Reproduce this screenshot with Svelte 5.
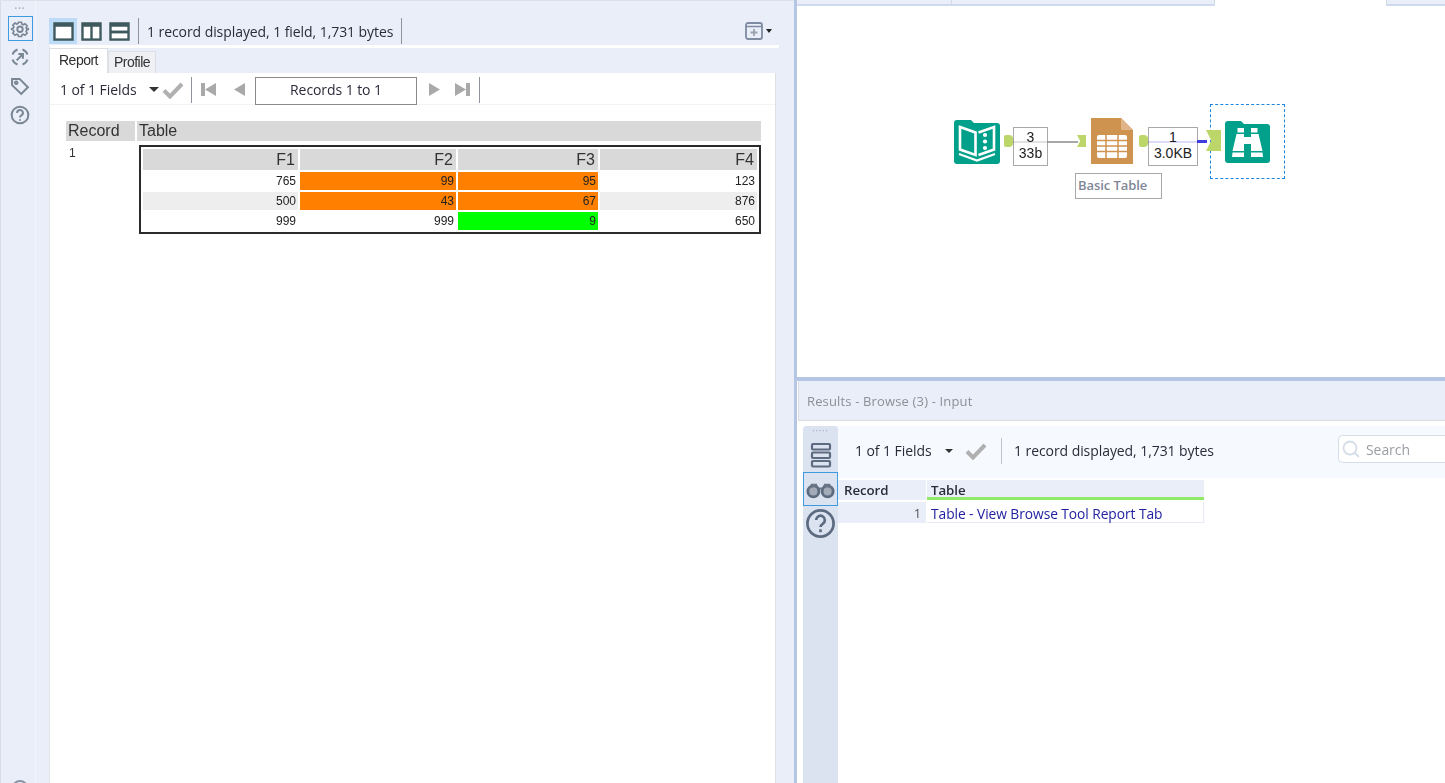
<script>
  const columns = ['F1', 'F2', 'F3', 'F4'];
  const rows = [
    [['765'], ['99', 'orange'], ['95', 'orange'], ['123']],
    [['500'], ['43', 'orange'], ['67', 'orange'], ['876']],
    [['999'], ['999'], ['9', 'green'], ['650']]
  ];
</script>

<div class="app">
  <section class="left">
    <nav class="rail">
      <div class="grip">•••</div>
      <button class="rail-btn selected" aria-label="Settings">
        <svg viewBox="0 0 24 24" width="22" height="22" fill="none" stroke="#7b8694" stroke-width="2.200">
          <path d="M10 3h4l.6 2.600 1.800.8 2.300-1.400 2.800 2.800-1.400 2.300.8 1.800L23 11.500v1l-2.100.9-.8 1.800 1.400 2.300-2.800 2.800-2.300-1.400-1.800.8L14 22h-4l-.6-2.300-1.800-.8-2.300 1.400-2.800-2.800 1.400-2.300-.8-1.800L1 12.500v-1l2.100-.6.8-1.800-1.400-2.300 2.800-2.800 2.300 1.400 1.800-.8z" transform="translate(1.200 1.200) scale(.9)"/>
          <circle cx="12" cy="12.300" r="3.300"/>
        </svg>
      </button>
      <button class="rail-btn" aria-label="Annotation">
        <svg viewBox="0 0 24 24" width="22" height="22" fill="none" stroke="#7b8694" stroke-width="2.400">
          <path d="M3 9a10 10 0 0 1 6-6M15 3a10 10 0 0 1 6 6M21 15a10 10 0 0 1-6 6M9 21a10 10 0 0 1-6-6"/>
          <path d="M8 16l7-7M10 8.500h5.500V14"/>
        </svg>
      </button>
      <button class="rail-btn" aria-label="Tags">
        <svg viewBox="0 0 24 24" width="22" height="22" fill="none" stroke="#7b8694" stroke-width="2.400">
          <path d="M2.500 3.500h9l10 10-8 8-11-10.500z"/><circle cx="7.500" cy="8" r="1.500"/>
        </svg>
      </button>
      <button class="rail-btn" aria-label="Help">
        <svg viewBox="0 0 24 24" width="22" height="22" fill="none" stroke="#7b8694" stroke-width="2.400">
          <circle cx="12" cy="12" r="10"/><path d="M8.500 9.500a3.500 3.500 0 1 1 5.200 3c-1.200.7-1.700 1.300-1.700 2.500"/><path d="M12 17v2"/>
        </svg>
      </button>
      <div class="rail-foot"></div>
    </nav>

    <div class="left-main">
      <header class="view-bar">
        <button class="view active" aria-label="Single">
          <svg viewBox="0 0 22 20" width="21" height="19"><rect x="1.500" y="1.500" width="19" height="17" fill="#fff" stroke="#3f5a5f" stroke-width="2.500"/><path d="M1 3.500h20" stroke="#3f5a5f" stroke-width="3"/></svg>
        </button>
        <button class="view" aria-label="Columns">
          <svg viewBox="0 0 22 20" width="21" height="19"><rect x="1.500" y="1.500" width="19" height="17" fill="#fff" stroke="#3f5a5f" stroke-width="2.500"/><path d="M1 3.500h20" stroke="#3f5a5f" stroke-width="3"/><path d="M11 2v16" stroke="#3f5a5f" stroke-width="2.500"/></svg>
        </button>
        <button class="view" aria-label="Rows">
          <svg viewBox="0 0 22 20" width="21" height="19"><rect x="1.500" y="1.500" width="19" height="17" fill="#fff" stroke="#3f5a5f" stroke-width="2.500"/><path d="M1 3.500h20" stroke="#3f5a5f" stroke-width="3"/><path d="M1 10.500h20" stroke="#3f5a5f" stroke-width="3"/></svg>
        </button>
        <span class="sep tall first-sep"></span>
        <span class="summary">1 record displayed, 1 field, 1,731 bytes</span>
        <span class="sep tall"></span>
        <span class="spacer"></span>
        <svg class="layout-icon" viewBox="0 0 18 18" width="18" height="18" fill="none">
          <rect x="1" y="1" width="16" height="16" rx="2" stroke="#7f8ba3" stroke-width="1.800"/>
          <path d="M1 4.500h16" stroke="#7f8ba3" stroke-width="1.500"/>
          <path d="M9 7v7M5.500 10.500h7" stroke="#9aa3ad" stroke-width="1.800"/>
        </svg>
        <span class="mini-caret"></span>
      </header>
      <div class="white-rule"></div>

      <div class="tabs">
        <span class="tab current">Report</span>
        <span class="tab">Profile</span>
      </div>

      <div class="report-panel">
        <div class="pager">
          <span class="fields">1 of 1 Fields</span>
          <span class="caret"></span>
          <svg class="check" viewBox="0 0 22 18" width="22" height="18"><path d="M2 9.500l6 6L20 3" fill="none" stroke="#b0b0b0" stroke-width="4"/></svg>
          <span class="sep pager-sep"></span>
          <svg class="nav first" viewBox="0 0 15 15" width="15" height="15"><path d="M0 1h4v13H0zM15 1v13L4 7.500z" fill="#a9a9a9"/></svg>
          <svg class="nav prev" viewBox="0 0 11 15" width="11" height="15"><path d="M11 1v13L0 7.500z" fill="#a9a9a9"/></svg>
          <div class="records">Records 1 to 1</div>
          <svg class="nav next" viewBox="0 0 11 15" width="11" height="15"><path d="M0 1v13l11-6.500z" fill="#a9a9a9"/></svg>
          <svg class="nav last" viewBox="0 0 15 15" width="15" height="15"><path d="M15 1h-4v13h4zM0 1v13l11-6.500z" fill="#a9a9a9"/></svg>
          <span class="sep pager-sep end"></span>
        </div>

        <div class="report">
          <div class="report-head">
            <span class="rh-record">Record</span>
            <span class="rh-table">Table</span>
          </div>
          <div class="report-row">
            <span class="record-no">1</span>
            <table class="inner">
              <colgroup>
                <col style="width:155px" /><col style="width:156px" /><col style="width:140px" /><col style="width:157px" />
              </colgroup>
              <thead>
                <tr>{#each columns as c}<th>{c}</th>{/each}</tr>
              </thead>
              <tbody>
                {#each rows as row, i}
                  <tr class:striped={i === 1}>
                    {#each row as cell}<td class={cell[1] ?? ''}>{cell[0]}</td>{/each}
                  </tr>
                {/each}
              </tbody>
            </table>
          </div>
        </div>
      </div>
    </div>
  </section>

  <div class="v-divider"></div>

  <section class="right">
    <div class="doc-tabs">
      <span class="doc-tab t1"></span>
      <span class="doc-tab t2"></span>
      <span class="doc-gap"></span>
      <span class="doc-tab t3"></span>
    </div>

    <div class="canvas">
      <svg class="node" style="left:157px;top:112px" viewBox="0 0 46 46" width="46" height="46">
        <path d="M0 5a3 3 0 0 1 3-3h14l3 3h23a3 3 0 0 1 3 3v35a3 3 0 0 1-3 3H3a3 3 0 0 1-3-3z" fill="#00a08a"/>
        <path d="M6 9l15.500 5.500V37L6 31.500z" fill="none" stroke="#fff" stroke-width="2.600"/>
        <path d="M24.500 14.500L40 9v22.500L24.500 37" fill="none" stroke="#fff" stroke-width="2.600"/>
        <path d="M5 36l18 6.500L41 36" fill="none" stroke="#fff" stroke-width="2.200"/>
        <circle cx="31" cy="17" r="2.100" fill="#fff"/><circle cx="31" cy="23.500" r="2.100" fill="#fff"/><circle cx="31" cy="30" r="2.100" fill="#fff"/>
      </svg>
      <span class="anchor out" style="left:207px;top:129px"></span>
      <div class="count" style="left:216px;top:121px;width:35px">3<br />33b</div>
      <span class="wire faint grey" style="left:216px;top:135px;width:35px"></span>
      <span class="wire" style="left:251px;top:135px;width:30px"></span>
      <span class="anchor in" style="left:280px;top:129px"></span>

      <svg class="node" style="left:294px;top:112px" viewBox="0 0 42 46" width="42" height="46">
        <path d="M0 0h30l12 12v34H0z" fill="#cf9350"/>
        <path d="M30 0l12 12H30z" fill="#e0b488"/>
        <rect x="6" y="17" width="30" height="23" rx="2" fill="#fff"/>
        <path d="M6 22.500h30M6 28h30M6 33.500h30M15 17v23M27 17v23" stroke="#cf9350" stroke-width="1.500"/>
      </svg>
      <span class="anchor out" style="left:342px;top:129px"></span>
      <div class="count" style="left:351px;top:121px;width:50px">1<br />3.0KB</div>
      <span class="wire faint" style="left:351px;top:135px;width:50px"></span>
      <span class="wire purple" style="left:400px;top:135px;width:10px"></span>

      <div class="comment" style="left:278px;top:167px">Basic Table</div>

      <div class="selection" style="left:413px;top:98px"></div>
      <span class="anchor big" style="left:409px;top:124px"></span>
      <svg class="node" style="left:428px;top:114px" viewBox="0 0 45 43" width="45" height="43">
        <path d="M0 4a3 3 0 0 1 3-3h13l3 3h23a3 3 0 0 1 3 3v33a3 3 0 0 1-3 3H3a3 3 0 0 1-3-3z" fill="#00a08a"/>
        <path d="M12.500 8h6.500v4.500h-6.500zM26 8h6.500v4.500H26zM11.500 14H19v17H7.500zM26 14h7.500L37.500 31H26zM19 17h7v7h-7zM7.500 32.500H19V37H7zM26 32.500h11.500L38 37H26z" fill="#fff"/>
      </svg>
    </div>

    <div class="h-divider"></div>

    <div class="results-title">Results - Browse (3) - Input</div>

    <div class="results">
      <aside class="res-rail">
        <div class="res-grip">•••••</div>
        <button class="res-btn" aria-label="Metadata">
          <svg viewBox="0 0 24 26" width="24" height="26" fill="none" stroke="#5d6b80" stroke-width="2.200">
            <rect x="3" y="2" width="18" height="5.500" rx="1"/><rect x="3" y="10.500" width="18" height="5.500" rx="1"/><rect x="3" y="19" width="18" height="5.500" rx="1"/>
          </svg>
        </button>
        <button class="res-btn picked" aria-label="Browse">
          <svg viewBox="0 0 30 20" width="29" height="19" fill="#6a7586">
            <circle cx="7.500" cy="12" r="5.800" fill="#a3abb8" stroke="#5d6b80" stroke-width="3"/>
            <circle cx="22.500" cy="12" r="5.800" fill="#a3abb8" stroke="#5d6b80" stroke-width="3"/>
            <path d="M2 10l3-6h6l2 4h4l2-4h6l3 6-6-3h-4l-2 3h-2l-2-3H8z"/>
          </svg>
        </button>
        <button class="res-btn help" aria-label="Help">
          <svg viewBox="0 0 32 32" width="31" height="31" fill="none" stroke="#5d6b80" stroke-width="2.800">
            <circle cx="16" cy="16" r="13.500"/><path d="M11.500 12.500a4.500 4.500 0 1 1 6.800 3.900c-1.500.9-2.300 1.600-2.300 3.100"/><path d="M16 22v3"/>
          </svg>
        </button>
      </aside>
      <div class="res-main">
        <div class="res-bar">
          <span class="res-fields">1 of 1 Fields</span>
          <span class="caret small"></span>
          <svg class="res-check" viewBox="0 0 22 18" width="22" height="18"><path d="M2 9.500l6 6L20 3" fill="none" stroke="#b0b0b0" stroke-width="4"/></svg>
          <span class="sep res-sep"></span>
          <span class="res-summary">1 record displayed, 1,731 bytes</span>
          <span class="spacer"></span>
          <div class="search">
            <svg viewBox="0 0 18 18" width="18" height="18" fill="none" stroke="#d5dde9" stroke-width="1.800"><circle cx="8" cy="8" r="6.500"/><path d="M12.500 12.500l4.500 4.500"/></svg>
            <span>Search</span>
          </div>
        </div>
        <div class="grid-table">
          <div class="gt-head gt-record">Record</div>
          <div class="gt-head gt-table">Table</div>
          <div class="gt-no">1</div>
          <div class="gt-link">Table - View Browse Tool Report Tab</div>
        </div>
      </div>
    </div>
  </section>
</div>

<style>
  :global(body) {
    margin: 0;
    background: #fff;
    overflow: hidden;
  }
  .app {
    display: grid;
    grid-template-columns: 794px 3px 1fr;
    width: 1445px;
    height: 783px;
    overflow: hidden;
    font-family: "Open Sans", "Noto Sans", sans-serif;
    font-size: 14px;
    letter-spacing: -.07px;
    color: #333;
  }
  button {
    border: 0;
    padding: 0;
    background: none;
    display: flex;
    align-items: center;
    justify-content: center;
  }

  /* left pane */
  .left {
    display: grid;
    grid-template-columns: 36px 1fr;
    background: #e9eef9;
    border-top: 1px solid #dde2ea;
    box-sizing: border-box;
    height: 783px;
    min-width: 0;
  }
  .rail {
    display: flex;
    flex-direction: column;
    align-items: center;
    border-left: 1px solid #d8dde6;
    border-right: 1px solid #f2f5fb;
    box-sizing: border-box;
    padding-left: 4px;
    overflow: hidden;
  }
  .grip {
    font-size: 7px;
    letter-spacing: 1px;
    color: #a9b0bb;
    height: 15px;
    line-height: 15px;
  }
  .rail-btn {
    width: 25px;
    height: 25px;
    margin-bottom: 3.700px;
    box-sizing: border-box;
  }
  .rail-btn svg { width: 20px; height: 20px; }
  .rail-btn.selected { border: 1px solid #3f9be0; }
  .rail-foot {
    margin-top: auto;
    margin-bottom: -13px;
    width: 16px;
    height: 16px;
    border: 2px solid #8792a3;
    border-radius: 50%;
    box-sizing: border-box;
    flex: none;
  }
  .left-main {
    display: flex;
    flex-direction: column;
    min-width: 0;
    padding-left: 13px;
    padding-right: 18px;
  }
  .view-bar {
    display: flex;
    align-items: center;
    height: 28px;
    margin-top: 16px;
  }
  .view {
    width: 28px;
    height: 26px;
  }
  .view.active { background: #bcdcf7; }
  .sep {
    display: inline-block;
    width: 1px;
    background: #8f949c;
  }
  .tall { height: 26px; }
  .first-sep { margin-left: 5px; }
  .summary {
    margin: 0 8px;
    white-space: nowrap;
    color: #2b2b3a;
  }
  .spacer { flex: 1; }
  .layout-icon { margin-right: 3px; }
  .mini-caret {
    width: 0;
    height: 0;
    border: 3.500px solid transparent;
    border-top: 4px solid #222;
    border-bottom: 0;
    margin-right: 4px;
  }
  .white-rule {
    height: 3px;
    background: #fff;
    margin-right: -3px;
    margin-left: 1px;
  }
  .tabs {
    display: flex;
    align-items: flex-end;
    height: 25px;
  }
  .tab {
    width: 48px;
    height: 22px;
    box-sizing: border-box;
    text-align: center;
    line-height: 21px;
    background: #eef0f3;
    border: 1px solid #dcdfe4;
    border-bottom: 0;
    font-family: "Liberation Sans", sans-serif;
    font-size: 14px;
    letter-spacing: -.5px;
  }
  .tab.current {
    width: 59px;
    height: 25px;
    line-height: 23px;
    background: #fff;
    color: #2e2e2e;
  }
  .report-panel {
    flex: 1;
    background: #fff;
    border-right: 1px solid #dcdfe4;
    border-left: 1px solid #e2e5ea;
    min-height: 0;
  }
  .pager {
    display: flex;
    align-items: center;
    height: 32px;
    padding-top: 2px;
    border-bottom: 1px solid #f3f3f3;
    box-sizing: border-box;
    padding-left: 10px;
  }
  .fields { white-space: nowrap; width: 87px; color: #2b2b3a; }
  .caret {
    width: 0;
    height: 0;
    border: 5px solid transparent;
    border-top: 5px solid #333;
    border-bottom: 0;
    margin-left: 2px;
  }
  .check { margin-left: 3px; margin-top: 1px; }
  .pager-sep { height: 26px; margin-left: 7px; margin-right: 9px; }
  .nav { flex: none; }
  .prev { margin-left: 18px; margin-right: 10px; }
  .records {
    width: 162px;
    height: 28px;
    flex: none;
    box-sizing: border-box;
    border: 1px solid #8a8a8a;
    text-align: center;
    line-height: 24px;
    margin-top: 2px;
    color: #2b2b3a;
  }
  .next { margin-left: 12px; }
  .last { margin-left: 15px; }
  .pager-sep.end { margin-left: 9px; }
  .report {
    padding: 16px 0 0 16px;
    font-family: "Liberation Sans", sans-serif;
    letter-spacing: 0;
  }
  .report-head {
    display: flex;
    gap: 2px;
    height: 20px;
    width: 695px;
    font-size: 16px;
    line-height: 20px;
    color: #333;
  }
  .rh-record {
    width: 69px;
    background: #d9d9d9;
    padding-left: 2px;
    box-sizing: border-box;
  }
  .rh-table {
    flex: 1;
    background: #d9d9d9;
    padding-left: 2px;
  }
  .report-row {
    display: flex;
    margin-top: 4px;
  }
  .record-no {
    width: 73px;
    padding: 1px 0 0 3px;
    box-sizing: border-box;
    font-size: 12px;
    line-height: 14px;
  }
  .inner {
    width: 622px;
    height: 89px;
    table-layout: fixed;
    border: 2px solid #2b2b2b;
    border-collapse: separate;
    border-spacing: 2px;
    box-sizing: border-box;
    font-size: 12px;
    color: #222;
    background: #fff;
  }
  .inner th {
    height: 21px;
    padding: 0 3px 0 0;
    background: #d9d9d9;
    font-size: 16px;
    font-weight: 400;
    text-align: right;
    color: #333;
  }
  .inner td {
    height: 18px;
    padding: 1px 2px 0 0;
    box-sizing: border-box;
    text-align: right;
    line-height: 17px;
  }
  .striped td { background: #eee; }
  .inner td.orange { background: #ff8000; }
  .inner td.green { background: #00ff00; }

  .v-divider { background: #b4c6e4; }

  /* right pane */
  .right {
    display: flex;
    flex-direction: column;
    min-width: 0;
    background: #fff;
  }
  .doc-tabs {
    display: flex;
    height: 6px;
    flex: none;
  }
  .doc-tab {
    background: #e9eef9;
    border-bottom: 2px solid #cfdaec;
    border-right: 1px solid #cfdaec;
    box-sizing: border-box;
  }
  .t1 { width: 155px; }
  .t2 { width: 263px; }
  .doc-gap { width: 171px; }
  .t3 { flex: 1; border-left: 1px solid #cfdaec; border-right: 0; }
  .canvas {
    position: relative;
    height: 371px;
    flex: none;
  }
  .node { position: absolute; }
  .anchor {
    position: absolute;
    width: 9px;
    height: 12px;
    background: #bcd66a;
  }
  .anchor.out { border-radius: 2px 4px 4px 2px; }
  .anchor.in { clip-path: polygon(0 0, 100% 0, 100% 100%, 0 100%, 35% 50%); }
  .anchor.big {
    width: 15px;
    height: 21px;
    clip-path: polygon(0 0, 100% 0, 100% 100%, 0 100%, 35% 50%);
  }
  .count {
    position: absolute;
    height: 39px;
    box-sizing: border-box;
    border: 1px solid #a9a9a9;
    background: #fff;
    text-align: center;
    font-family: "Liberation Sans", sans-serif;
    font-size: 14px;
    letter-spacing: 0;
    line-height: 16px;
    padding-top: 1px;
    color: #222;
  }
  .wire {
    position: absolute;
    height: 2px;
    background: #a8a8a8;
  }
  .wire.purple { background: #3d3de0; height: 3px; margin-top: -1px; }
  .wire.faint { background: #dcdcf8; mix-blend-mode: multiply; }
  .wire.faint.grey { background: #e2e2e2; }
  .comment {
    position: absolute;
    width: 87px;
    height: 26px;
    box-sizing: border-box;
    border: 1px solid #a9a9a9;
    background: #fff;
    font-size: 13px;
    font-weight: 600;
    line-height: 23px;
    padding-left: 2px;
    color: #7f8797;
    white-space: nowrap;
  }
  .selection {
    position: absolute;
    width: 75px;
    height: 75px;
    box-sizing: border-box;
    border: 1px dashed #1c86e0;
  }
  .h-divider {
    height: 4px;
    flex: none;
    background: #b4c6e4;
  }
  .results-title {
    height: 40px;
    flex: none;
    box-sizing: border-box;
    background: #e9eef9;
    border: 1px solid #d9dce2;
    border-top-color: #e9eef9;
    border-right: 0;
    line-height: 38px;
    padding-left: 8px;
    margin-left: 1px;
    font-size: 13px;
    letter-spacing: .15px;
    color: #8c8f96;
  }
  .results {
    flex: 1;
    display: flex;
    min-height: 0;
    padding: 5px 0 0 6px;
  }
  .res-rail {
    width: 35px;
    flex: none;
    background: #dce3f0;
    border-radius: 3px 3px 0 0;
    display: flex;
    flex-direction: column;
    align-items: center;
  }
  .res-grip {
    font-size: 6px;
    letter-spacing: 1px;
    color: #aab2bf;
    height: 12px;
    line-height: 10px;
  }
  .res-btn { width: 35px; height: 34px; box-sizing: border-box; flex: none; }
  .res-btn.picked { border: 1px solid #3f9be0; }
  .res-btn.help { height: 35px; width: 34px; }
  .res-main {
    flex: 1;
    min-width: 0;
    display: flex;
    flex-direction: column;
  }
  .res-bar {
    display: flex;
    align-items: center;
    height: 52px;
    flex: none;
    box-sizing: border-box;
    background: #f6f9fe;
    padding: 0 0 3px 17px;
    color: #2b2b3a;
  }
  .res-fields { white-space: nowrap; width: 88px; }
  .caret.small {
    border-width: 4px;
    border-top-width: 4px;
    border-top-color: #333;
    margin-left: 2px;
  }
  .res-check { margin-left: 12px; }
  .res-sep { height: 26px; margin-left: 14px; margin-right: 12px; background: #c0c4ca; }
  .res-summary { white-space: nowrap; }
  .search {
    width: 120px;
    height: 28px;
    flex: none;
    box-sizing: border-box;
    border: 1px solid #d5dde9;
    border-right: 0;
    border-radius: 5px 0 0 5px;
    background: #fff;
    display: flex;
    align-items: center;
    gap: 6px;
    padding-left: 3px;
    margin-right: -13px;
    margin-top: -3px;
    color: #9a9da3;
  }
  .grid-table {
    display: grid;
    grid-template-columns: 88px 277px;
    grid-template-rows: 20px 21px;
    width: 366px;
    margin-top: 2px;
    column-gap: 1px;
    row-gap: 2px;
    background: #fff;
  }
  .gt-head {
    background: #e9eef9;
    font-size: 13.300px;
    font-weight: 600;
    line-height: 20px;
    padding-left: 6px;
    color: #2b2b3a;
  }
  .gt-table {
    border-bottom: 3px solid #8fea6a;
    height: 20px;
    box-sizing: border-box;
    padding-left: 4px;
  }
  .gt-no {
    background: #e9eef9;
    text-align: right;
    padding-right: 5px;
    font-size: 13px;
    line-height: 22px;
    color: #555;
  }
  .gt-link {
    color: #2222a0;
    font-size: 13.800px;
    padding: 1px 0 0 4px;
    line-height: 22px;
    height: 21px;
    box-sizing: border-box;
    border: 1px solid #e4e9f4;
    border-top: 0;
    border-left: 0;
    white-space: nowrap;
  }
</style>
